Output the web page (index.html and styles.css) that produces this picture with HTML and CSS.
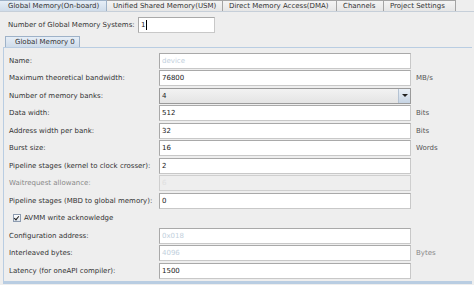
FILE: index.html
```html
<!DOCTYPE html>
<html lang="en">
<head>
    <meta charset="UTF-8">
    <title>Global Memory</title>
    <link rel="stylesheet" href="styles.css">
</head>
<body>
    <div class="tabs">
        <div class="tab active">Global Memory(On-board)</div>
        <div class="tab">Unified Shared Memory(USM)</div>
        <div class="tab">Direct Memory Access(DMA)</div>
        <div class="tab">Channels</div>
        <div class="tab">Project Settings</div>
    </div>

    <div class="content">
        <div class="systems">
            <span class="systems-label">Number of Global Memory Systems:</span>
            <div class="field systems-field">1<span class="caret"></span></div>
        </div>

        <div class="inner-tabs">
            <div class="tab active">Global Memory 0</div>
        </div>

        <div class="panel">
            <div class="row">
                <div class="label">Name:</div>
                <div class="field disabled-text">device</div>
            </div>
            <div class="row">
                <div class="label">Maximum theoretical bandwidth:</div>
                <div class="field">76800</div>
                <div class="unit">MB/s</div>
            </div>
            <div class="row">
                <div class="label">Number of memory banks:</div>
                <div class="field combo">
                    <span class="combo-value">4</span>
                    <span class="combo-btn"></span>
                </div>
            </div>
            <div class="row">
                <div class="label">Data width:</div>
                <div class="field">512</div>
                <div class="unit">Bits</div>
            </div>
            <div class="row">
                <div class="label">Address width per bank:</div>
                <div class="field">32</div>
                <div class="unit">Bits</div>
            </div>
            <div class="row">
                <div class="label">Burst size:</div>
                <div class="field">16</div>
                <div class="unit">Words</div>
            </div>
            <div class="row">
                <div class="label">Pipeline stages (kernel to clock crosser):</div>
                <div class="field">2</div>
            </div>
            <div class="row">
                <div class="label muted">Waitrequest allowance:</div>
                <div class="field disabled">6</div>
            </div>
            <div class="row">
                <div class="label">Pipeline stages (MBD to global memory):</div>
                <div class="field">0</div>
            </div>
            <div class="row">
                <label class="check"><span class="box"></span>AVMM write acknowledge</label>
            </div>
            <div class="row">
                <div class="label">Configuration address:</div>
                <div class="field disabled-text">0x018</div>
            </div>
            <div class="row">
                <div class="label">Interleaved bytes:</div>
                <div class="field disabled-text">4096</div>
                <div class="unit muted">Bytes</div>
            </div>
            <div class="row">
                <div class="label">Latency (for oneAPI compiler):</div>
                <div class="field">1500</div>
            </div>
        </div>
    </div>
</body>
</html>
```

FILE: styles.css
```css
* {
    box-sizing: border-box;
}

body {
    margin: 0;
    background: #eeeeee;
    font-family: "DejaVu Sans", Verdana, sans-serif;
    font-size: 7px;
    color: #333;
    width: 474px;
    height: 285px;
    overflow: hidden;
}

/* tab strips */
.tabs {
    display: flex;
    height: 12px;
    border-bottom: 1px solid #c6cfd9;
    background: #eeeeee;
}

.tab {
    height: 11px;
    line-height: 10px;
    padding: 0 5px 0 6px;
    border: 1px solid #a4a4a4;
    border-bottom: none;
    border-left: none;
    background: linear-gradient(#f4f4f4, #e6e6e6);
    color: #333;
    font-size: 7px;
    white-space: nowrap;
}

.tabs .tab:nth-child(1) { width: 107px; }
.tabs .tab:nth-child(2) { width: 116px; }
.tabs .tab:nth-child(3) { width: 114px; }
.tabs .tab:nth-child(4) { width: 47px; }
.tabs .tab:nth-child(5) { width: 72px; }

.tab.active {
    background: linear-gradient(#e6eef7, #cfdcea);
    border-color: #9eb2c8;
    padding-left: 8px;
}

.content {
    padding-top: 4px;
}

.systems {
    display: flex;
    align-items: center;
    padding-left: 8px;
    height: 17px;
}

.systems-label {
    width: 130px;
}

.field {
    width: 252px;
    height: 16px;
    line-height: 14px;
    padding-left: 2px;
    border: 1px solid #a9a9a9;
    border-right-color: #c8c8c8;
    border-bottom-color: #c8c8c8;
    background: #fff;
    color: #222;
    font-size: 7px;
}

.systems-field {
    width: 77px;
    display: flex;
    align-items: center;
}

.caret {
    width: 1px;
    height: 10px;
    background: #000;
    margin-left: 1px;
}

.inner-tabs {
    display: flex;
    margin: 3px 0 0 5px;
}

.inner-tabs .tab {
    width: 75px;
    border-left: 1px solid #9eb2c8;
    padding-left: 9px;
}

.panel {
    margin: 0 2px 0 3px;
    border: 1px solid #b9cde2;
    border-right: none;
    border-bottom-width: 3px;
    padding: 4px 0 3px 5px;
    height: 237px;
}

.row {
    display: flex;
    align-items: center;
    height: 17.5px;
}

.label {
    width: 150px;
    white-space: nowrap;
}

.unit {
    margin-left: 5px;
    color: #555;
}

.muted {
    color: #888;
}

.disabled-text {
    color: #c2cfdc;
}

.field.disabled {
    background: #eeeeee;
    border-color: #cfcfcf;
    color: #e0e0e0;
}

.combo {
    display: flex;
    padding: 0;
    background: linear-gradient(#f2f2f2, #e4e4e4);
    border-color: #9a9a9a;
}

.combo-value {
    flex: 1;
    padding-left: 2px;
}

.combo-btn {
    width: 12px;
    border-left: 1px solid #b5c3d3;
    background: linear-gradient(#e9f0f7, #c6d4e4);
    position: relative;
}

.combo-btn::before {
    content: "";
    position: absolute;
    left: 3px;
    top: 5px;
    border-style: solid;
    border-width: 3px 3px 0 3px;
    border-color: #222 transparent transparent transparent;
}

.check {
    display: flex;
    align-items: center;
    padding-left: 4px;
}

.box {
    width: 8px;
    height: 8px;
    margin-right: 3px;
    border: 1px solid #8c9bb0;
    background: linear-gradient(#fff, #dfe6ee);
    position: relative;
}

.box::after {
    content: "";
    position: absolute;
    left: 1px;
    top: 0px;
    width: 2px;
    height: 4px;
    border: solid #222;
    border-width: 0 1.5px 1.5px 0;
    transform: rotate(40deg);
}
```
